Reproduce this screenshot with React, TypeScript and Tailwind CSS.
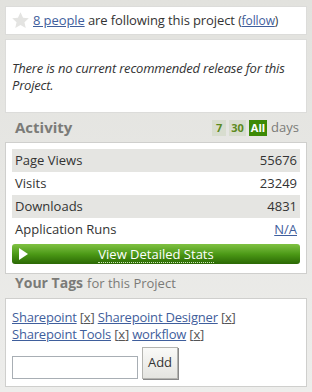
import React from 'react';

const stats = [
  { label: 'Page Views', value: '55676', shade: true },
  { label: 'Visits', value: '23249', shade: false },
  { label: 'Downloads', value: '4831', shade: true },
];

const tags = [
  ['Sharepoint', 'Sharepoint Designer'],
  ['Sharepoint Tools', 'workflow'],
];

const Star = () => (
  <svg width="19" height="19" viewBox="0 0 24 24" className="shrink-0">
    <path
      d="M12 1.5l3.2 6.9 7.3.8-5.5 5 1.6 7.3L12 17.8l-6.6 3.7L7 14.2 1.5 9.2l7.3-.8z"
      fill="#e4e4e2"
    />
  </svg>
);

export default function App() {
  return (
    <div
      className="w-[312px] h-[392px] overflow-hidden bg-gradient-to-b from-[#e2e2de] to-[#ededeb] px-[5px] pt-[6px] text-[#333] text-[13px]"
      style={{ fontFamily: '"Open Sans", "Noto Sans", sans-serif' }}
    >
      {/* followers */}
      <div className="h-[29px] bg-white border border-[#dcdcda] flex items-center gap-[3px] pl-[5px]">
        <Star />
        <span className="tracking-[-0.1px]">
          <a className="text-[#3f5e9c] underline">8 people</a> are following this project{' '}
          <span className="text-[12px]">
            (<a className="text-[#3f5e9c] underline">follow</a>)
          </span>
        </span>
      </div>

      {/* release */}
      <div className="mt-[4px] h-[74px] bg-white border border-[#dcdcda] px-[6px] pt-[20px] italic leading-[17px] tracking-[-0.2px]">
        There is no current recommended release for this Project.
      </div>

      {/* activity header */}
      <div className="h-[29px] flex items-center justify-between pl-[10px] pr-[8px]">
        <span className="text-[#7b7b78] font-bold text-[15px]">Activity</span>
        <div className="flex items-center gap-[3px] text-[11px] font-bold">
          <span className="bg-[#d8ddcf] text-[#5c8a20] px-[4px] h-[16px] leading-[16px]">7</span>
          <span className="bg-[#d8ddcf] text-[#5c8a20] px-[2px] h-[16px] leading-[16px]">30</span>
          <span className="bg-[#3d8a06] text-white px-[2px] h-[16px] leading-[16px]">All</span>
          <span className="text-[#7b7b78] text-[13px] font-normal ml-[1px]">days</span>
        </div>
      </div>

      {/* stats */}
      <div className="bg-white border border-[#cfcfcd] px-[6px] pt-[6px] pb-[9px]">
        {stats.map((s) => (
          <div
            key={s.label}
            className={`h-[23px] flex items-center justify-between px-[3px] ${s.shade ? 'bg-[#e5e5e2]' : ''}`}
          >
            <span>{s.label}</span>
            <span>{s.value}</span>
          </div>
        ))}
        <div className="h-[23px] flex items-center justify-between px-[3px]">
          <span>Application Runs</span>
          <a className="text-[#3f5e9c] underline">N/A</a>
        </div>
        <div className="mt-[3px] h-[20px] rounded-[3px] bg-gradient-to-b from-[#80c242] via-[#4c9a16] to-[#2b6805] flex items-center relative">
          <svg width="9" height="12" viewBox="0 0 9 12" className="absolute left-[7px] top-[4px]">
            <path d="M0 0L9 6L0 12Z" fill="#fff" />
          </svg>
          <span className="mx-auto text-white leading-[16px] border-b border-dotted border-[#cde8b6]">
            View Detailed Stats
          </span>
        </div>
      </div>

      {/* tags header */}
      <div className="h-[24px] flex items-end pb-[5px] pl-[10px]">
        <span className="text-[#7b7b78] font-bold text-[14px]">Your Tags</span>
        <span className="text-[#7b7b78] ml-[4px]">for this Project</span>
      </div>

      {/* tags */}
      <div className="bg-white border border-[#cfcfcd] px-[6px] pt-[10px] pb-[8px] h-[89px]">
        <div className="leading-[17px] tracking-[-0.2px]">
          {tags.map((line, i) => (
            <div key={i}>
              {line.map((t, j) => (
                <span key={t}>
                  <a className="text-[#3f5e9c] underline">{t}</a>{' '}
                  <span className="text-[#555]">
                    [<span className="underline">x</span>]
                  </span>
                  {j < line.length - 1 ? ' ' : ''}
                </span>
              ))}
            </div>
          ))}
        </div>
        <div className="flex items-end gap-[4px] mt-[4px]">
          <input className="w-[126px] h-[23px] border border-[#a8aeb4] bg-white" />
          <button className="w-[36px] h-[32px] border border-[#b4b4b0] bg-gradient-to-b from-[#fafaf8] to-[#e4e4e0] shadow-[1px_1px_0_#888] text-[#333]">
            Add
          </button>
        </div>
      </div>
    </div>
  );
}
